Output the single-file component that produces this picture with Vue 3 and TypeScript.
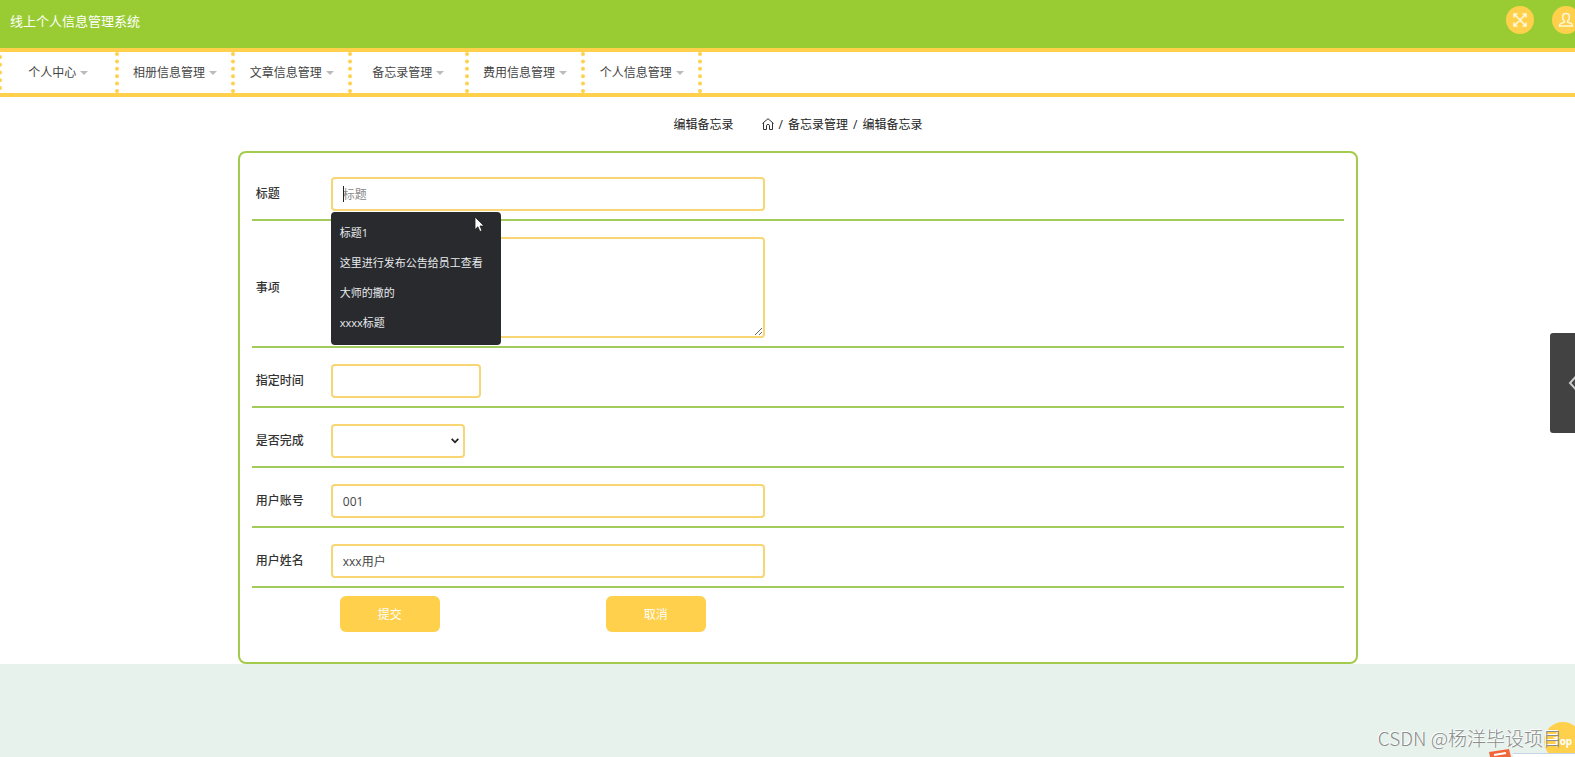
<script setup lang="ts">
import { ref } from 'vue'

const menus: string[] = ['个人中心', '相册信息管理', '文章信息管理', '备忘录管理', '费用信息管理', '个人信息管理']
const suggestions: string[] = ['标题1', '这里进行发布公告给员工查看', '大师的撒的', 'xxxx标题']

const title = ref('')
const matter = ref('')
const time = ref('')
const done = ref('')
const account = ref('001')
const userName = ref('xxx用户')
</script>

<template>
  <div class="viewport">
    <div class="page">
      <header class="header">
        <h1 class="brand">线上个人信息管理系统</h1>
        <div class="tools">
          <button type="button" class="round" aria-label="全屏">
            <svg width="14" height="14" viewBox="0 0 14 14" fill="none" stroke="#fff8dc" stroke-width="1.5">
              <path d="M1.5 1.5 12.5 12.5M12.5 1.5 1.5 12.5M1 4.5V1H4.5M9.5 1H13V4.5M13 9.5V13H9.5M4.5 13H1V9.5" />
            </svg>
          </button>
          <button type="button" class="round" aria-label="用户">
            <svg width="16" height="16" viewBox="0 0 16 16" fill="none" stroke="#fff8dc" stroke-width="1.5">
              <path d="M8 1.5C5.900 1.500 4.600 3 4.600 5.100C4.600 6.900 5.400 8.300 6.400 9V10.200L2.600 11.600C1.800 12 1.500 12.700 1.500 14H14.500C14.500 12.700 14.200 12 13.400 11.600L9.600 10.200V9C10.600 8.300 11.400 6.900 11.400 5.100C11.400 3 10.100 1.500 8 1.500Z" />
            </svg>
          </button>
        </div>
      </header>

      <nav class="nav">
        <ul class="menu">
          <li class="edge" aria-hidden="true"></li>
          <li v-for="m in menus" :key="m" class="item">
            <a href="#">{{ m }}<span class="caret"></span></a>
          </li>
        </ul>
      </nav>

      <main class="main">
        <div class="crumbs">
          <h2>编辑备忘录</h2>
          <div class="trail">
            <a href="#" aria-label="首页">
              <svg width="12" height="12" viewBox="0 0 12 12" fill="none" stroke="#333" stroke-width="1">
                <path d="M.5 5.500 6 .700 11.500 5.500M1.500 4.800V11.500H4.500V7.500Q4.500 6.500 6 6.500T7.500 7.500V11.500H10.500V4.800" />
              </svg>
            </a>
            <span>/</span><a href="#">备忘录管理</a><span>/</span><span>编辑备忘录</span>
          </div>
        </div>

        <form class="card" @submit.prevent>
          <div class="row">
            <label for="title">标题</label>
            <div class="field">
              <input id="title" v-model="title" class="wide" type="text" placeholder="标题" autocomplete="off" />
              <span class="insertion"></span>
              <ul class="suggest">
                <li v-for="s in suggestions" :key="s">{{ s }}</li>
              </ul>
              <svg class="pointer" width="12" height="18" viewBox="0 0 12 18">
                <path d="M1 1V13.500L3.900 10.800L5.900 15.500L8 14.600L6 10H10Z" fill="#fff" stroke="#222" stroke-width=".8" />
              </svg>
            </div>
          </div>
          <div class="row">
            <label for="matter">事项</label>
            <div class="field"><textarea id="matter" v-model="matter" class="wide"></textarea></div>
          </div>
          <div class="row">
            <label for="time">指定时间</label>
            <div class="field"><input id="time" v-model="time" class="date" type="text" /></div>
          </div>
          <div class="row">
            <label for="done">是否完成</label>
            <div class="field">
              <select id="done" v-model="done">
                <option value=""></option>
                <option>是</option>
                <option>否</option>
              </select>
              <svg class="arrow" width="8" height="6" viewBox="0 0 8 6" fill="none" stroke="#222" stroke-width="1.800">
                <path d="M.7 .9 4 4.300 7.300 .9" />
              </svg>
            </div>
          </div>
          <div class="row">
            <label for="account">用户账号</label>
            <div class="field"><input id="account" v-model="account" class="wide" type="text" /></div>
          </div>
          <div class="row">
            <label for="username">用户姓名</label>
            <div class="field"><input id="username" v-model="userName" class="wide" type="text" /></div>
          </div>
          <div class="actions">
            <button type="submit">提交</button>
            <button type="button">取消</button>
          </div>
        </form>
      </main>
    </div>

    <button type="button" class="drawer" aria-label="展开">
      <svg width="12" height="16" viewBox="0 0 12 16" fill="none" stroke="#ccc" stroke-width="2">
        <path d="M8 1.500 2 8 8 14.500M12 4.500 8 8 12 11.500" />
      </svg>
    </button>
    <button type="button" class="top">Top</button>
    <div class="ime">
      <svg width="24" height="8" viewBox="0 0 24 8">
        <path d="M0 3 20 0 22 8H1Z" fill="#f2673a" />
        <path d="M5 6 17 4" stroke="#fff" stroke-width="2" />
      </svg>
      <span class="strip"></span>
    </div>
    <div class="mark">CSDN @杨洋毕设项目</div>
  </div>
</template>

<style>
body {
  background: #e7f2ec;
}
</style>

<style scoped>
* {
  box-sizing: border-box;
}
.viewport {
  position: relative;
  min-height: 100vh;
  overflow: hidden;
  background: #e7f2ec;
  color: #444;
  font: 12px/18px "Open Sans", "Noto Sans CJK SC", sans-serif;
}
.page {
  width: calc(100% + 21px);
  background: #fff;
}
h1, h2, ul {
  margin: 0;
  padding: 0;
  font: inherit;
  list-style: none;
}
a {
  color: inherit;
  text-decoration: none;
}
button, input, textarea, select {
  font: inherit;
  color: inherit;
}
.header {
  display: flex;
  justify-content: space-between;
  height: 48px;
  padding: 6px 16px 14px 10px;
  background: #9c3;
}
.brand {
  color: #fff;
  font-size: 13px;
  line-height: 30px;
}
.tools {
  display: flex;
  gap: 18px;
}
.round {
  display: grid;
  place-items: center;
  width: 28px;
  height: 28px;
  padding: 0;
  border: 0;
  border-radius: 50%;
  background: #ffd04b;
}
.nav {
  border-top: 4px solid #ffd04b;
  border-bottom: 4px solid #ffd04b;
}
.menu {
  display: grid;
  grid-template-columns: 4px repeat(6, 1fr);
  width: 704px;
  height: 41px;
  margin-left: -2px;
}
.edge {
  margin: 3px 0;
  border-left: 4px dotted #ffd04b;
}
.item {
  border-right: 4px dotted #ffd04b;
}
.item a {
  display: flex;
  align-items: center;
  justify-content: center;
  gap: 4px;
  height: 100%;
}
.caret {
  border: 4px solid transparent;
  border-top-color: #bbb;
  border-bottom: 0;
}
.main {
  padding-top: 19px;
}
.crumbs {
  display: flex;
  justify-content: center;
  gap: 28px;
  margin-bottom: 17px;
  color: #222;
}
.trail {
  display: flex;
  gap: 5px;
}
.trail svg {
  display: block;
  margin-top: 2px;
}
.card {
  width: 70.2%;
  margin: 0 auto;
  padding: 8px 12px 30px;
  border: 2px solid #a3cb4c;
  border-radius: 8px;
}
.row {
  display: flex;
  align-items: center;
  padding: 16px 4px 8px;
  border-bottom: 2px solid #a3cb5c;
}
.row label {
  width: 75px;
  color: #333;
  font-weight: 500;
}
.field {
  position: relative;
  display: flex;
  flex: 1;
}
input, textarea, select {
  height: 34px;
  padding: 0 10px;
  border: 2px solid #f8d673;
  border-radius: 4px;
  outline: 0;
  background: #fff;
}
input::placeholder {
  color: #888;
}
.wide {
  width: 43%;
}
textarea {
  height: 101px;
  resize: both;
}
.date {
  width: 150px;
}
select {
  width: 134px;
  appearance: none;
}
.arrow {
  position: absolute;
  left: 120px;
  top: 14px;
  pointer-events: none;
}
.insertion {
  position: absolute;
  left: 12px;
  top: 9px;
  width: 1px;
  height: 16px;
  background: #222;
}
.suggest {
  position: absolute;
  z-index: 2;
  left: 0;
  top: 35px;
  width: 170px;
  padding: 6px 9px 7px;
  border-radius: 4px;
  background: #292a2d;
  color: #e8eaed;
  font-size: 11px;
  line-height: 30px;
}
.pointer {
  position: absolute;
  z-index: 3;
  left: 143px;
  top: 39px;
}
.actions {
  display: flex;
  gap: 166px;
  padding: 8px 0 0 88px;
}
.actions button {
  width: 100px;
  height: 36px;
  padding: 2px 0 0;
  border: 0;
  border-radius: 6px;
  background: #ffd04b;
  color: #fff;
}
.drawer {
  position: absolute;
  right: 0;
  top: 333px;
  width: 25px;
  height: 100px;
  padding: 0 0 0 18px;
  overflow: hidden;
  border: 0;
  border-radius: 3px 0 0 3px;
  background: #424242;
}
.drawer svg {
  display: block;
}
.top {
  position: absolute;
  right: -7px;
  bottom: -3px;
  width: 38px;
  height: 38px;
  padding: 0;
  border: 0;
  border-radius: 50%;
  background: #ffd04b;
  color: #fff;
  font-size: 10px;
  font-weight: 700;
}
.ime {
  position: absolute;
  right: 0;
  bottom: 0;
  display: flex;
  align-items: flex-end;
}
.strip {
  width: 62px;
  height: 4px;
  border-top: 1px solid #c5d3e6;
  background: #fff;
}
.mark {
  position: absolute;
  right: 13px;
  bottom: 4px;
  color: #8c8c8c;
  font: 300 19px/30px "Noto Sans CJK SC", sans-serif;
  text-shadow: -1px -1px 0 #fff;
}
</style>
